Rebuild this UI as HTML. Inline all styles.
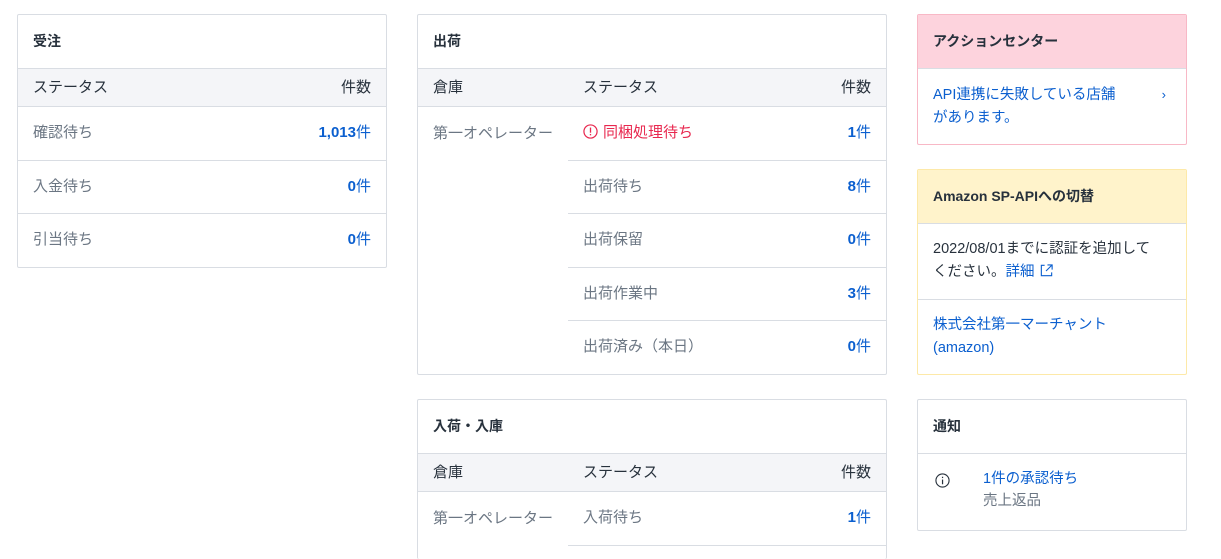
<!DOCTYPE html>
<html style="height:559px;overflow:hidden"><head><meta charset="utf-8"><style>
*{box-sizing:border-box;margin:0;padding:0}
body{width:1221px;height:559px;overflow:hidden;background:#fff;font-family:"Liberation Sans","Noto Sans CJK JP",sans-serif;font-size:14px;color:#27313c;position:relative}
.card{position:absolute;border:1px solid #d9dde3;border-radius:2px;background:#fff;overflow:hidden}
.hd{height:54px;border-bottom:1px solid #d9dde3;padding:0 15px;line-height:53px;font-weight:bold;font-size:14px;color:#27313c}
.th{height:38px;background:#f4f5f8;border-bottom:1px solid #d9dde3;position:relative;line-height:37px;color:#27313c;font-size:15px}
.row{height:53.6px;border-bottom:1px solid #d9dde3;position:relative;line-height:52px;color:#6b7683;font-size:15px}
.row:last-child{border-bottom:none}
.l{position:absolute;left:15px}
.r{position:absolute;right:15px}
.n{color:#0b5fcf;font-weight:bold}
.n span{font-weight:normal}
.blue{color:#0b5fcf}
</style></head><body>

<div class="card" style="left:17px;top:14px;width:370px;height:254px">
<div class="hd">受注</div>
<div class="th"><span class="l">ステータス</span><span class="r">件数</span></div>
<div class="row"><span class="l">確認待ち</span><span class="r n">1,013<span>件</span></span></div>
<div class="row"><span class="l">入金待ち</span><span class="r n">0<span>件</span></span></div>
<div class="row"><span class="l">引当待ち</span><span class="r n">0<span>件</span></span></div>
</div>

<div class="card" style="left:417px;top:14px;width:470px;height:361px">
<div class="hd">出荷</div>
<div class="th"><span class="l">倉庫</span><span style="position:absolute;left:165px">ステータス</span><span class="r">件数</span></div>
<div style="position:absolute;left:15px;top:93px;line-height:52px;color:#6b7683;font-size:15px">第一オペレーター</div>
<div style="margin-left:150px">
<div class="row"><span class="l" style="color:#e8284f"><svg width="15" height="15" viewBox="0 0 16 16" style="vertical-align:-2px;margin-right:5px"><circle cx="8" cy="8" r="7" fill="none" stroke="#e8284f" stroke-width="1.3"/><rect x="7.3" y="3.8" width="1.4" height="5.5" fill="#e8284f"/><rect x="7.3" y="10.6" width="1.4" height="1.5" fill="#e8284f"/></svg>同梱処理待ち</span><span class="r n">1<span>件</span></span></div>
<div class="row"><span class="l">出荷待ち</span><span class="r n">8<span>件</span></span></div>
<div class="row"><span class="l">出荷保留</span><span class="r n">0<span>件</span></span></div>
<div class="row"><span class="l">出荷作業中</span><span class="r n">3<span>件</span></span></div>
<div class="row"><span class="l">出荷済み（本日）</span><span class="r n">0<span>件</span></span></div>
</div>
</div>

<div class="card" style="left:417px;top:399px;width:470px;height:160px;border-bottom:none">
<div class="hd">入荷・入庫</div>
<div class="th"><span class="l">倉庫</span><span style="position:absolute;left:165px">ステータス</span><span class="r">件数</span></div>
<div style="position:absolute;left:15px;top:93px;line-height:52px;color:#6b7683;font-size:15px">第一オペレーター</div>
<div style="margin-left:150px">
<div class="row" style="border-bottom:1px solid #d9dde3"><span class="l">入荷待ち</span><span class="r n">1<span>件</span></span></div>
</div>
</div>

<div class="card" style="left:917px;top:14px;width:270px;height:131px;border-color:#f8b8c6">
<div class="hd" style="background:#fdd3dd">アクションセンター</div>
<div class="blue" style="padding:15px 15px;line-height:23px;font-size:14.5px;position:relative">API連携に失敗している店舗<br>があります。<span style="position:absolute;right:20px;top:14px;font-size:13px">›</span></div>
</div>

<div class="card" style="left:917px;top:169px;width:270px;height:206px;border-color:#fde9a8">
<div class="hd" style="background:#fff3cb">Amazon SP-APIへの切替</div>
<div style="padding:14px 15px;line-height:23px;font-size:14.5px;height:76px;border-bottom:1px solid #d9dde3">2022/08/01までに認証を追加して<br>ください。<span class="blue">詳細 <svg width="15" height="15" viewBox="0 0 16 16" style="vertical-align:-2px"><path d="M6 2.5H2.5v11h11V10M9 2h5v5M14 2L7.5 8.5" fill="none" stroke="#0b5fcf" stroke-width="1.2"/></svg></span></div>
<div class="blue" style="padding:14px 15px;line-height:23px;font-size:14.5px">株式会社第一マーチャント<br>(amazon)</div>
</div>

<div class="card" style="left:917px;top:399px;width:270px;height:132px">
<div class="hd">通知</div>
<div style="position:relative;padding:14px 0 0 65px;line-height:22px;font-size:14.5px">
<svg width="15" height="15" viewBox="0 0 16 16" style="position:absolute;left:17px;top:19px"><circle cx="8" cy="8" r="7" fill="none" stroke="#27313c" stroke-width="1.2"/><rect x="7.4" y="7" width="1.3" height="5" fill="#27313c"/><rect x="7.4" y="4" width="1.3" height="1.4" fill="#27313c"/></svg>
<div class="blue">1件の承認待ち</div><div style="color:#6b7683">売上返品</div></div>
</div>

</body></html>
